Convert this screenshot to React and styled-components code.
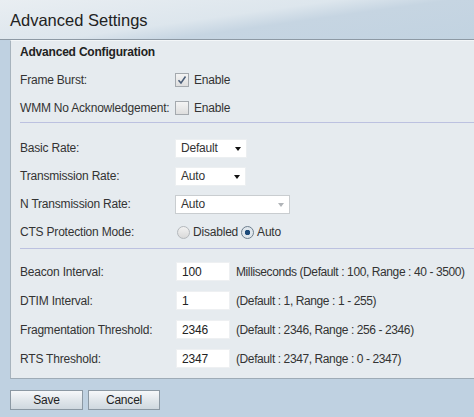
import React from "react";
import styled, { createGlobalStyle } from "styled-components";

const GlobalStyle = createGlobalStyle`
  html, body {
    margin: 0;
    padding: 0;
    background: #bfd1e1;
    font-family: "Liberation Sans", Arial, sans-serif;
    font-size: 12px;
    letter-spacing: -0.2px;
    color: #333;
    overflow: hidden;
  }
`;

const Page = styled.div`
  width: 474px;
  height: 417px;
  display: flex;
  flex-direction: column;
  background: #bfd1e1;
`;

const Header = styled.div`
  height: 40px;
  display: flex;
  align-items: center;
  padding-left: 10px;
  border-bottom: 1px solid #8d99a4;
  background: linear-gradient(172deg, #e9eef2 0%, #dde6ed 45%, #c6d5e2 60%, #c2d3e1 100%);
  box-sizing: border-box;
`;

const Title = styled.h1`
  margin: 0;
  font-size: 16.5px;
  font-weight: normal;
  letter-spacing: 0;
  color: #222;
  padding-top: 2px;
`;

const Body = styled.div`
  padding-left: 10px;
`;

const Panel = styled.div`
  background: #e6ebef;
  border-left: 1px solid #a7b3bd;
  border-top: 1px solid #f3f6f8;
  border-bottom: 1px solid #9eabb6;
  padding-left: 9px;
`;

const Heading = styled.div`
  font-weight: bold;
  line-height: 22px;
  color: #222;
  margin-bottom: 3px;
`;

const Section = styled.div`
  padding-top: ${(p) => p.$top || 0}px;
  padding-bottom: ${(p) => p.$bottom || 0}px;
  border-bottom: ${(p) => (p.$line ? "1px solid #bcc1e0" : "none")};
`;

const Row = styled.div`
  display: flex;
  align-items: center;
  white-space: nowrap;
  height: ${(p) => p.$h || 28}px;
`;

const Label = styled.div`
  width: 155px;
  flex-shrink: 0;
`;

const Control = styled.div`
  display: flex;
  align-items: center;
  gap: ${(p) => p.$gap || 5}px;
`;

const Check = styled.span`
  width: 12px;
  height: 12px;
  border: 1px solid #a4a9ae;
  background: linear-gradient(#f4f4f4, #dedede);
  display: inline-flex;
  align-items: center;
  justify-content: center;
`;

const Radio = styled.span`
  width: 11px;
  height: 11px;
  border-radius: 50%;
  border: 1px solid ${(p) => (p.$on ? "#6e7f8e" : "#b4b8bc")};
  background: ${(p) => (p.$on ? "radial-gradient(circle, #1c4a7a 0 2.5px, #dfe6ec 3px)" : "linear-gradient(#f2f2f2, #d9d9d9)")};
  display: inline-block;
  margin-left: ${(p) => p.$ml || 0}px;
`;

const SelectBox = styled.div`
  width: ${(p) => p.$w}px;
  height: 19px;
  box-sizing: border-box;
  background: #fff;
  border: 1px solid ${(p) => (p.$muted ? "#c9cdd0" : "#eceff1")};
  display: flex;
  align-items: center;
  justify-content: space-between;
  padding: 0 5px 0 5px;
`;

const Caret = styled.span`
  width: 0;
  height: 0;
  border-left: 3.5px solid transparent;
  border-right: 3.5px solid transparent;
  border-top: 4px solid ${(p) => (p.$muted ? "#b0b4b8" : "#111")};
  margin-top: 1px;
`;

const TextInput = styled.input`
  width: 54px;
  height: 19px;
  box-sizing: border-box;
  border: 1px solid #eef0f2;
  background: #fff;
  font: inherit;
  letter-spacing: inherit;
  color: #222;
  padding: 0 5px;
  margin-left: 1px;
  outline: none;
`;

const Note = styled.span`
  margin-left: 6px;
  letter-spacing: -0.4px;
`;

const Footer = styled.div`
  display: flex;
  gap: 5px;
  padding: 11px 0 0 10px;
`;

const Button = styled.button`
  width: ${(p) => p.$w}px;
  height: 20px;
  border: 1px solid #8b98a3;
  background: linear-gradient(#f6f8fa, #dfe5ea 55%, #cfd8df);
  font: inherit;
  font-size: 12px;
  letter-spacing: inherit;
  color: #222;
  padding: 0;
`;

const CheckMark = () => (
  <svg width="10" height="10" viewBox="0 0 10 10">
    <path d="M1.5 5.2 L4 8 L8.5 1.5" fill="none" stroke="#4a5d78" strokeWidth="1.5" />
  </svg>
);

const Select = ({ w, value, muted }) => (
  <SelectBox $w={w} $muted={muted}>
    <span>{value}</span>
    <Caret $muted={muted} />
  </SelectBox>
);

const Field = ({ label, value, note }) => (
  <Row $h={29}>
    <Label>{label}</Label>
    <TextInput defaultValue={value} />
    <Note>{note}</Note>
  </Row>
);

export default function App() {
  return (
    <Page>
      <GlobalStyle />
      <Header>
        <Title>Advanced Settings</Title>
      </Header>
      <Body>
        <Panel>
          <Section $line>
            <Heading>Advanced Configuration</Heading>
            <Row>
              <Label>Frame Burst:</Label>
              <Control>
                <Check>
                  <CheckMark />
                </Check>
                Enable
              </Control>
            </Row>
            <Row>
              <Label>WMM No Acknowledgement:</Label>
              <Control>
                <Check />
                Enable
              </Control>
            </Row>
          </Section>
          <Section $line $top={11} $bottom={2}>
            <Row>
              <Label>Basic Rate:</Label>
              <Select w={72} value="Default" />
            </Row>
            <Row>
              <Label>Transmission Rate:</Label>
              <Select w={71} value="Auto" />
            </Row>
            <Row>
              <Label>N Transmission Rate:</Label>
              <Select w={115} value="Auto" muted />
            </Row>
            <Row>
              <Label>CTS Protection Mode:</Label>
              <Control $gap={3}>
                <Radio $ml={2} />
                <span>Disabled</span>
                <Radio $on />
                <span>Auto</span>
              </Control>
            </Row>
          </Section>
          <Section $top={8} $bottom={5}>
            <Field label="Beacon Interval:" value="100" note="Milliseconds (Default : 100, Range : 40 - 3500)" />
            <Field label="DTIM Interval:" value="1" note="(Default : 1, Range : 1 - 255)" />
            <Field label="Fragmentation Threshold:" value="2346" note="(Default : 2346, Range : 256 - 2346)" />
            <Field label="RTS Threshold:" value="2347" note="(Default : 2347, Range : 0 - 2347)" />
          </Section>
        </Panel>
      </Body>
      <Footer>
        <Button $w={73}>Save</Button>
        <Button $w={72}>Cancel</Button>
      </Footer>
    </Page>
  );
}
